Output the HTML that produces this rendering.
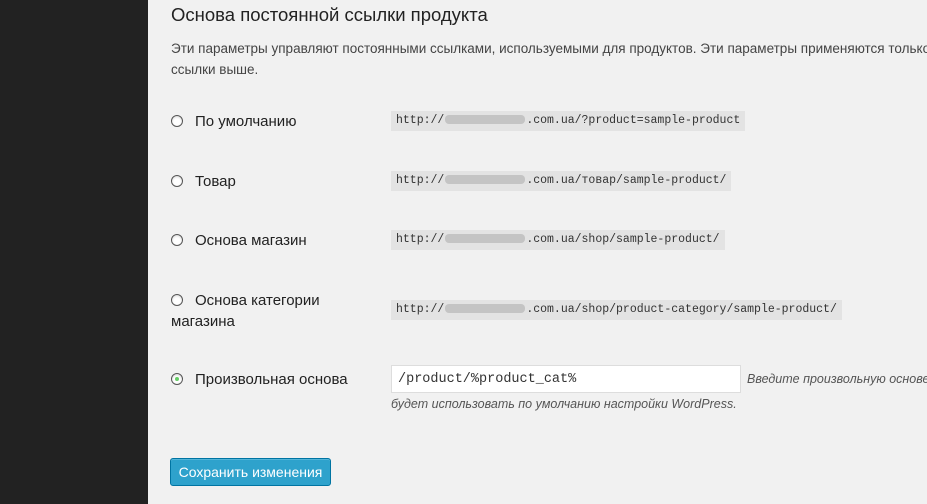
<!DOCTYPE html>
<html><head><meta charset="utf-8"><style>
body{margin:0;width:927px;height:504px;overflow:hidden;background:#f1f1f1;font-family:"Liberation Sans",sans-serif;color:#222;position:relative}
#sb{position:absolute;left:0;top:0;width:148px;height:504px;background:#222}
.a{position:absolute;white-space:nowrap}
h2{position:absolute;left:171px;top:4px;margin:0;font-size:18.5px;font-weight:normal;color:#222}
.d{font-size:13.5px;color:#444}
.l{font-size:15px;color:#222}
.r{position:absolute;width:10px;height:10px;border:1px solid #555;border-radius:50%;background:#fff;box-shadow:inset 0 1px 2px rgba(0,0,0,.15)}
.c{position:absolute;height:20px;background:#e3e3e3;font-family:"Liberation Mono",monospace;font-size:11.5px;line-height:20px;padding:0 5px;color:#333;white-space:nowrap}
.bl{display:inline-block;width:80px;height:9px;background:#c4c4c4;vertical-align:middle;border-radius:4px;margin:0 1px}
.i{position:absolute;left:391px;top:365px;height:28px;background:#fff;border:1px solid #ddd;font-family:"Liberation Mono",monospace;font-size:13.5px;line-height:28px;padding-left:6px;box-sizing:border-box;width:350px;color:#333}
.e{font-style:italic;font-size:12.5px;color:#555}
.btn{position:absolute;left:170px;top:458px;width:161px;height:28px;background:#2ea2cc;border:1px solid #0074a2;border-radius:3px;color:#fff;font-size:14px;line-height:27px;text-align:center;box-sizing:border-box;box-shadow:inset 0 1px 0 rgba(120,200,230,.5)}
</style></head><body>
<div id="sb"></div>
<h2>Основа постоянной ссылки продукта</h2>
<div class="a d" style="left:171px;top:41px">Эти параметры управляют постоянными ссылками, используемыми для продуктов. Эти параметры применяются только</div>
<div class="a d" style="left:171px;top:62px">ссылки выше.</div>

<div class="r" style="left:171px;top:115px"></div><div class="a l" style="left:195px;top:113px">По умолчанию</div>
<div class="c" style="left:391px;top:111px">http://<span class="bl"></span>.com.ua/?product=sample-product</div>

<div class="r" style="left:171px;top:175px"></div><div class="a l" style="left:195px;top:173px">Товар</div>
<div class="c" style="left:391px;top:171px">http://<span class="bl"></span>.com.ua/товар/sample-product/</div>

<div class="r" style="left:171px;top:234px"></div><div class="a l" style="left:195px;top:232px">Основа магазин</div>
<div class="c" style="left:391px;top:230px">http://<span class="bl"></span>.com.ua/shop/sample-product/</div>

<div class="r" style="left:171px;top:294px"></div><div class="a l" style="left:195px;top:292px">Основа категории</div>
<div class="a l" style="left:171px;top:313px">магазина</div>
<div class="c" style="left:391px;top:300px">http://<span class="bl"></span>.com.ua/shop/product-category/sample-product/</div>

<div class="r" style="left:171px;top:373px"><div style="position:absolute;left:3px;top:3px;width:4px;height:4px;border-radius:50%;background:#6c6"></div></div>
<div class="a l" style="left:195px;top:371px">Произвольная основа</div>
<div class="i">/product/%product_cat%</div>
<div class="a e" style="left:747px;top:372px">Введите произвольную основе</div>
<div class="a e" style="left:391px;top:397px">будет использовать по умолчанию настройки WordPress.</div>
<div class="btn">Сохранить изменения</div>
</body></html>
